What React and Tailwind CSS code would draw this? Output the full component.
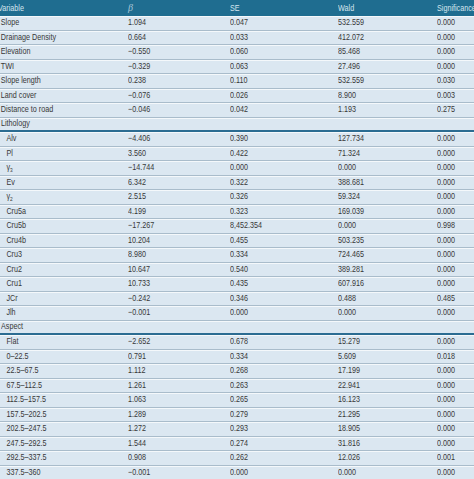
import React from "react";

const top = [
  ["Slope", "1.094", "0.047", "532.559", "0.000"],
  ["Drainage Density", "0.664", "0.033", "412.072", "0.000"],
  ["Elevation", "−0.550", "0.060", "85.468", "0.000"],
  ["TWI", "−0.329", "0.063", "27.496", "0.000"],
  ["Slope length", "0.238", "0.110", "532.559", "0.030"],
  ["Land cover", "−0.076", "0.026", "8.900", "0.003"],
  ["Distance to road", "−0.046", "0.042", "1.193", "0.275"],
];

const lithology = [
  ["Alv", "−4.406", "0.390", "127.734", "0.000"],
  ["Pl", "3.560", "0.422", "71.324", "0.000"],
  [<>γ<sub className="text-[6px]">3</sub></>, "−14.744", "0.000", "0.000", "0.000"],
  ["Ev", "6.342", "0.322", "388.681", "0.000"],
  [<>γ<sub className="text-[6px]">2</sub></>, "2.515", "0.326", "59.324", "0.000"],
  ["Cru5a", "4.199", "0.323", "169.039", "0.000"],
  ["Cru5b", "−17.267", "8,452.354", "0.000", "0.998"],
  ["Cru4b", "10.204", "0.455", "503.235", "0.000"],
  ["Cru3", "8.980", "0.334", "724.465", "0.000"],
  ["Cru2", "10.647", "0.540", "389.281", "0.000"],
  ["Cru1", "10.733", "0.435", "607.916", "0.000"],
  ["JCr", "−0.242", "0.346", "0.488", "0.485"],
  ["Jlh", "−0.001", "0.000", "0.000", "0.000"],
];

const aspect = [
  ["Flat", "−2.652", "0.678", "15.279", "0.000"],
  ["0–22.5", "0.791", "0.334", "5.609", "0.018"],
  ["22.5–67.5", "1.112", "0.268", "17.199", "0.000"],
  ["67.5–112.5", "1.261", "0.263", "22.941", "0.000"],
  ["112.5–157.5", "1.063", "0.265", "16.123", "0.000"],
  ["157.5–202.5", "1.289", "0.279", "21.295", "0.000"],
  ["202.5–247.5", "1.272", "0.293", "18.905", "0.000"],
  ["247.5–292.5", "1.544", "0.274", "31.816", "0.000"],
  ["292.5–337.5", "0.908", "0.262", "12.026", "0.001"],
  ["337.5–360", "−0.001", "0.000", "0.000", "0.000"],
];

const grid = "grid grid-cols-[128px_102px_108px_99px_1fr] items-center";

function Cell({ children, className = "" }) {
  return <div className={`origin-left scale-x-[0.8] ${className}`}>{children}</div>;
}

function Row({ cells, sub }) {
  return (
    <div className={`${grid} h-[14.5px] border-b border-[#a9bccb] shadow-[inset_0_1px_0_#f4f8fb] bg-[#dbe7f1]`}>
      {cells.map((c, i) => (
        <Cell key={i} className={i === 0 ? (sub ? "pl-[8px]" : "pl-px") : ""}>
          {c}
        </Cell>
      ))}
    </div>
  );
}

function Section({ title }) {
  return (
    <div className="h-[14.5px] flex items-center pl-px bg-[#dbe7f1] border-b-2 border-[#2b6c92] shadow-[inset_0_1px_0_#f4f8fb]">
      <Cell>{title}</Cell>
    </div>
  );
}

export default function App() {
  return (
    <div
      className="w-[474px] h-[479px] overflow-hidden bg-[#dbe7f1] text-[9px] leading-none text-[#383838] whitespace-nowrap"
      style={{ fontFamily: '"Liberation Sans", Arial, sans-serif' }}
    >
      <div className={`${grid} h-[16px] bg-[#1f6d90] text-[#d6e6ef]`}>
        <Cell className="-ml-[2px]">Variable</Cell>
        <div className="italic text-[10px] text-[#a9c6d8]" style={{ fontFamily: '"Liberation Serif", serif' }}>β</div>
        <Cell>SE</Cell>
        <Cell>Wald</Cell>
        <Cell>Significance</Cell>
      </div>
      {top.map((r, i) => (
        <Row key={i} cells={r} />
      ))}
      <Section title="Lithology" />
      {lithology.map((r, i) => (
        <Row key={i} cells={r} sub />
      ))}
      <Section title="Aspect" />
      {aspect.map((r, i) => (
        <Row key={i} cells={r} sub />
      ))}
    </div>
  );
}
